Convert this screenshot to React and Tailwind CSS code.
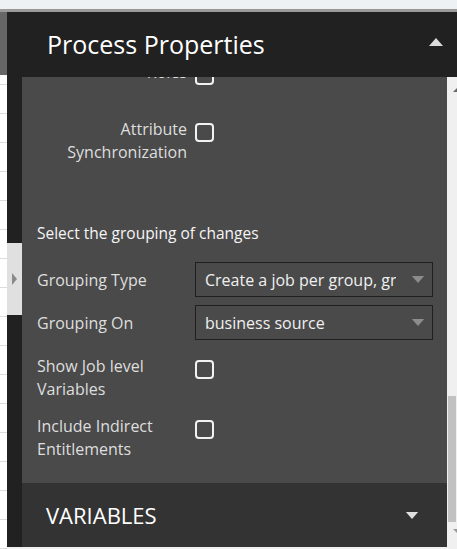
import React from 'react';

const Checkbox = () => (
  <span className="mt-[5px] block w-[19px] h-[19px] shrink-0 rounded-[4px] border-2 border-[#f2f2f2]" />
);

const Caret = ({ up, className }) => (
  <svg viewBox="0 0 14 8" className={className}>
    <polygon points={up ? '0,8 14,8 7,0' : '0,0 14,0 7,8'} fill="currentColor" />
  </svg>
);

const Select = ({ value }) => (
  <div className="flex items-center h-[35px] w-[238px] border border-[#1f1f1f] bg-[#4a4a4a]">
    <span className="w-[200px] pl-[9px] overflow-hidden whitespace-nowrap text-[16px] text-[#f0f0f0]">{value}</span>
    <Caret className="ml-[15px] w-[14px] h-[7px] text-[#8c8c8c]" />
  </div>
);

// 左侧页面背景（被面板遮住的表格）
const PageStrip = () => (
  <div className="w-[7px] shrink-0 flex flex-col bg-white">
    <div className="h-[71px] bg-[#666]" />
    <div className="h-[11px] border-b border-[#dcdcdc]" />
    {Array.from({ length: 16 }).map((_, i) => (
      <div key={i} className="h-[29px] shrink-0 border-b border-[#dcdcdc]" />
    ))}
  </div>
);

const CheckRow = ({ label, right, className = '' }) => (
  <div className={`flex ${className}`}>
    <div className={`w-[150px] leading-[23px] text-[16px] text-[#dedede] ${right ? 'text-right' : ''}`}>{label}</div>
    <div className="ml-[8px]"><Checkbox /></div>
  </div>
);

export default function App() {
  return (
    <div
      className="w-[457px] h-[549px] overflow-hidden flex flex-col bg-[#f0f0f0]"
      style={{ fontFamily: '"Open Sans", "Noto Sans", sans-serif' }}
    >
      <div className="h-[9px] shrink-0 bg-[#eef1f3]" />
      <div className="h-[3px] shrink-0 bg-[#9a9a9a]" />
      <div className="flex flex-1 min-h-0">
        <PageStrip />
        <div className="flex-1 flex flex-col min-w-0">
          {/* 面板标题 */}
          <div className="h-[65px] shrink-0 bg-[#212121] flex items-center pl-[40px] pr-[14px]">
            <span className="flex-1 text-[25px] text-white leading-none">Process Properties</span>
            <Caret up className="w-[14px] h-[8px] text-[#dcdcdc] mb-[6px]" />
          </div>
          <div className="flex h-[470px] shrink-0">
            {/* 左侧深色边条 + 折叠按钮 */}
            <div className="w-[15px] shrink-0 bg-[#212121] flex flex-col">
              <div className="h-[166px]" />
              <div className="h-[72px] bg-[#e0e0e0] flex items-center justify-center">
                <svg viewBox="0 0 5 12" className="w-[5px] h-[12px]">
                  <polygon points="0,0 5,6 0,12" fill="#8a8a8a" />
                </svg>
              </div>
            </div>
            <div className="w-[425px] shrink-0 flex flex-col">
              <div className="h-[406px] bg-[#4a4a4a] overflow-hidden">
                <div className="pl-[15px] mt-[-16px] flex flex-col">
                  <CheckRow right label="Roles" />
                  <CheckRow right className="mt-[33px]" label={<>Attribute<br />Synchronization</>} />
                  <div className="mt-[58px] leading-[23px] text-[15.5px] text-[#f5f5f5]">Select the grouping of changes</div>
                  <div className="mt-[17px] flex items-center">
                    <div className="w-[150px] text-[16px] text-[#dedede]">Grouping Type</div>
                    <div className="ml-[8px]"><Select value="Create a job per group, group by business source" /></div>
                  </div>
                  <div className="mt-[8px] flex items-center">
                    <div className="w-[150px] text-[16px] text-[#dedede]">Grouping On</div>
                    <div className="ml-[8px]"><Select value="business source" /></div>
                  </div>
                  <CheckRow className="mt-[15px]" label={<>Show Job level<br />Variables</>} />
                  <CheckRow className="mt-[14px]" label={<>Include Indirect<br />Entitlements</>} />
                </div>
              </div>
              <div className="h-[64px] bg-[#333] flex items-center pl-[24px] pr-[28px]">
                <span className="flex-1 text-[22px] text-white leading-none">VARIABLES</span>
                <Caret className="w-[14px] h-[7px] text-[#e0e0e0]" />
              </div>
            </div>
            {/* 滚动条 */}
            <div className="w-[10px] shrink-0 bg-[#f0f0f0] flex flex-col items-end">
              <svg viewBox="0 0 4 4" className="mt-[11px] w-[4px] h-[4px]">
                <polygon points="0,4 4,4 4,0" fill="#666" />
              </svg>
              <div className="mt-[304px] w-[8px] h-[126px] bg-[#c1c1c1] self-center" />
              <svg viewBox="0 0 4 4" className="mt-[7px] w-[4px] h-[4px]">
                <polygon points="0,0 4,0 4,4" fill="#999" />
              </svg>
            </div>
          </div>
        </div>
      </div>
    </div>
  );
}
